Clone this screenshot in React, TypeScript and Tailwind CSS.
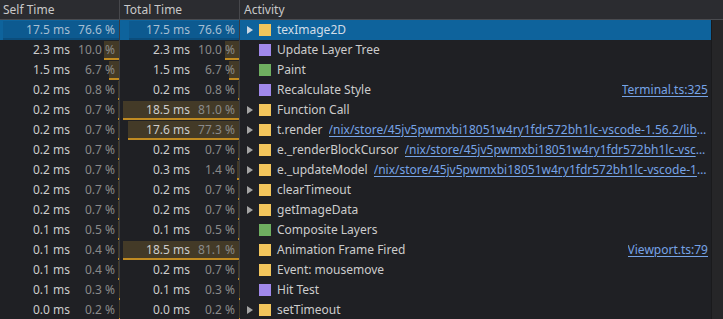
import React from 'react';

type Row = {
  self: string;
  selfPct: number;
  total: string;
  totalPct: number;
  name: string;
  color: 'y' | 'p' | 'g';
  expand?: boolean;
  link?: string;
  linkRight?: boolean;
  selected?: boolean;
};

const NIX = '/nix/store/45jv5pwmxbi18051w4ry1fdr572bh1lc-vscode-1.56.2/lib/vscode/out/vs/workbench/workbench.desktop.main.js:4567';

const rows: Row[] = [
  { self: '17.5 ms', selfPct: 76.6, total: '17.5 ms', totalPct: 76.6, name: 'texImage2D', color: 'y', expand: true, selected: true },
  { self: '2.3 ms', selfPct: 10.0, total: '2.3 ms', totalPct: 10.0, name: 'Update Layer Tree', color: 'p' },
  { self: '1.5 ms', selfPct: 6.7, total: '1.5 ms', totalPct: 6.7, name: 'Paint', color: 'g' },
  { self: '0.2 ms', selfPct: 0.8, total: '0.2 ms', totalPct: 0.8, name: 'Recalculate Style', color: 'p', link: 'Terminal.ts:325', linkRight: true },
  { self: '0.2 ms', selfPct: 0.7, total: '18.5 ms', totalPct: 81.0, name: 'Function Call', color: 'y', expand: true },
  { self: '0.2 ms', selfPct: 0.7, total: '17.6 ms', totalPct: 77.3, name: 't.render', color: 'y', expand: true, link: NIX },
  { self: '0.2 ms', selfPct: 0.7, total: '0.2 ms', totalPct: 0.7, name: 'e._renderBlockCursor', color: 'y', expand: true, link: NIX },
  { self: '0.2 ms', selfPct: 0.7, total: '0.3 ms', totalPct: 1.4, name: 'e._updateModel', color: 'y', expand: true, link: NIX },
  { self: '0.2 ms', selfPct: 0.7, total: '0.2 ms', totalPct: 0.7, name: 'clearTimeout', color: 'y', expand: true },
  { self: '0.2 ms', selfPct: 0.7, total: '0.2 ms', totalPct: 0.7, name: 'getImageData', color: 'y', expand: true },
  { self: '0.1 ms', selfPct: 0.5, total: '0.1 ms', totalPct: 0.5, name: 'Composite Layers', color: 'g' },
  { self: '0.1 ms', selfPct: 0.4, total: '18.5 ms', totalPct: 81.1, name: 'Animation Frame Fired', color: 'y', link: 'Viewport.ts:79', linkRight: true },
  { self: '0.1 ms', selfPct: 0.4, total: '0.2 ms', totalPct: 0.7, name: 'Event: mousemove', color: 'y' },
  { self: '0.1 ms', selfPct: 0.3, total: '0.1 ms', totalPct: 0.3, name: 'Hit Test', color: 'p' },
  { self: '0.0 ms', selfPct: 0.2, total: '0.0 ms', totalPct: 0.2, name: 'setTimeout', color: 'y', expand: true },
];

const SELF_MAX = 76.6;
const TOTAL_MAX = 81.1;

const swatch = {
  y: 'bg-[#f2c55c]',
  p: 'bg-[#a088ea]',
  g: 'bg-[#6fae60]',
};

const TimeCell = ({ time, pct, max, selected }: { time: string; pct: number; max: number; selected?: boolean }) => (
  <div className="relative h-5 w-[120px] shrink-0 border-r border-[#3b3c40]">
    {/* bar */}
    <div className="absolute inset-y-0 left-[3px] right-0 flex justify-end pt-px">
      <div
        style={{ width: `${(pct / max) * 100}%` }}
        className={
          selected
            ? 'h-full border-b-2 border-[#0b4d7c] bg-[#0d5a90]'
            : 'h-full border-b-2 border-[#c08b22] bg-[#433a27]'
        }
      />
    </div>
    <div className="relative flex h-full items-center justify-end pr-1 text-xs">
      <span className={selected ? 'text-[#a6bfd3]' : 'text-[#cccccc]'}>{time}</span>
      <span className={selected ? 'w-[45px] text-right text-[#a6bfd3]' : 'w-[45px] text-right text-[#8a8a8a]'}>
        {pct.toFixed(1)} %
      </span>
    </div>
  </div>
);

const Triangle = ({ selected }: { selected?: boolean }) => (
  <svg width="6" height="8" viewBox="0 0 6 8">
    <path d="M0 0 L6 4 L0 8 Z" fill={selected ? '#c9d6e2' : '#a4a4a4'} />
  </svg>
);

export default function App() {
  return (
    <div
      className="h-[319px] w-[723px] overflow-hidden bg-[#1f2024] text-xs text-[#cccccc]"
      style={{ fontFamily: '"Noto Sans", "Open Sans", sans-serif' }}
    >
      {/* Header */}
      <div className="flex h-5 border-b border-[#4a4b4f] bg-[#2b2c30] text-[#c8c8c8]">
        <div className="flex w-[120px] shrink-0 items-center border-r border-[#47484c] pl-[3px]">Self Time</div>
        <div className="flex w-[120px] shrink-0 items-center border-r border-[#47484c] pl-[4px]">Total Time</div>
        <div className="flex flex-1 items-center pl-[4px]">Activity</div>
      </div>

      <div className="flex">
        <div className="min-w-0 flex-1">
          {rows.map((r, i) => (
            <div key={i} className={r.selected ? 'flex h-5 bg-[#0e639c]' : 'flex h-5'}>
              <TimeCell time={r.self} pct={r.selfPct} max={SELF_MAX} selected={r.selected} />
              <TimeCell time={r.total} pct={r.totalPct} max={TOTAL_MAX} selected={r.selected} />
              <div className="flex min-w-0 flex-1 items-center pl-[7px] pr-[3px]">
                <div className="flex w-3 shrink-0 items-center">{r.expand && <Triangle selected={r.selected} />}</div>
                <div className={`h-3 w-3 shrink-0 ${swatch[r.color]}`} />
                <span className={r.selected ? 'ml-1.5 shrink-0 text-[#d2dde7]' : 'ml-1.5 shrink-0 text-[#cccccc]'}>
                  {r.name}
                </span>
                {r.link && (
                  <span
                    className={`${r.linkRight ? 'ml-auto' : 'ml-1.5'} min-w-0 truncate text-[#76a3e6] underline underline-offset-2`}
                  >
                    {r.link}
                  </span>
                )}
              </div>
            </div>
          ))}
        </div>
        {/* scrollbar track */}
        <div className="h-[300px] w-3 shrink-0 border-l border-[#1a1a1c] bg-[#262628]" />
      </div>
    </div>
  );
}
